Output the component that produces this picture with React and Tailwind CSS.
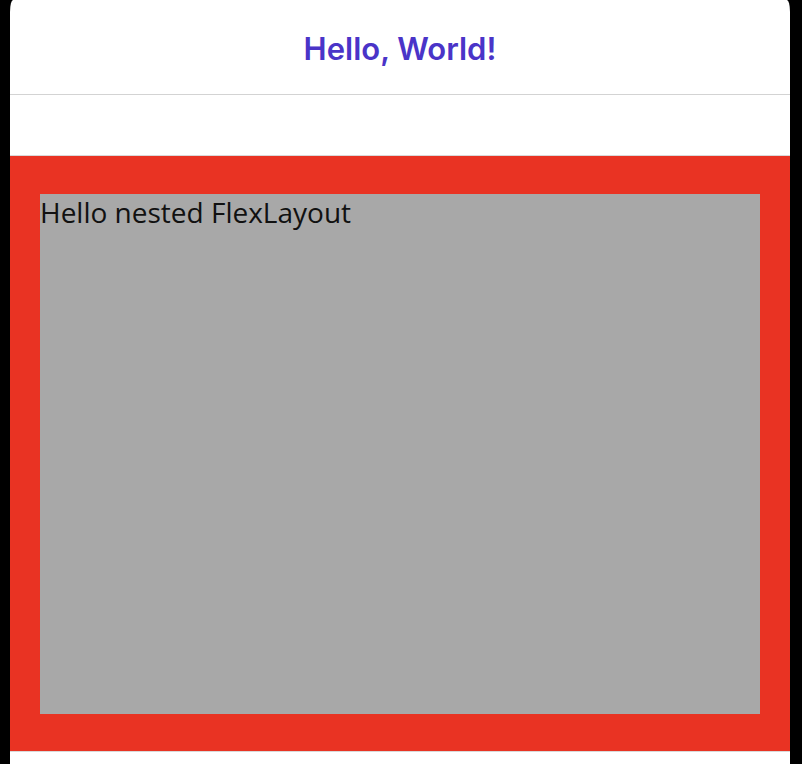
export default function App() {
  return (
    <div className="w-[802px] h-[764px] bg-black flex overflow-hidden">
      <div className="ml-[10px] w-[780px] h-full bg-white rounded-t-[3px_12px] flex flex-col overflow-hidden">
        <div className="h-[95px] shrink-0 pt-[30px] flex justify-center border-b border-[#d3d3d3]">
          <span className="text-[31px] leading-[38px] font-semibold text-[#4a34c8] h-[38px]" style={{ fontFamily: 'Inter, "Liberation Sans", sans-serif' }}>
            Hello, World!
          </span>
        </div>
        <div className="h-[60px] shrink-0" />
        <div className="h-[597px] shrink-0 bg-[#e93323] border-t border-b border-[#d9d9d9] pt-[38px] pb-[37px] px-[30px] flex flex-col">
          <div className="flex-1 bg-[#a8a8a8]">
            <div className="text-[28px] leading-[37px] text-[#111]" style={{ fontFamily: '"Open Sans", "Noto Sans", sans-serif' }}>
              Hello nested FlexLayout
            </div>
          </div>
        </div>
      </div>
    </div>
  );
}
